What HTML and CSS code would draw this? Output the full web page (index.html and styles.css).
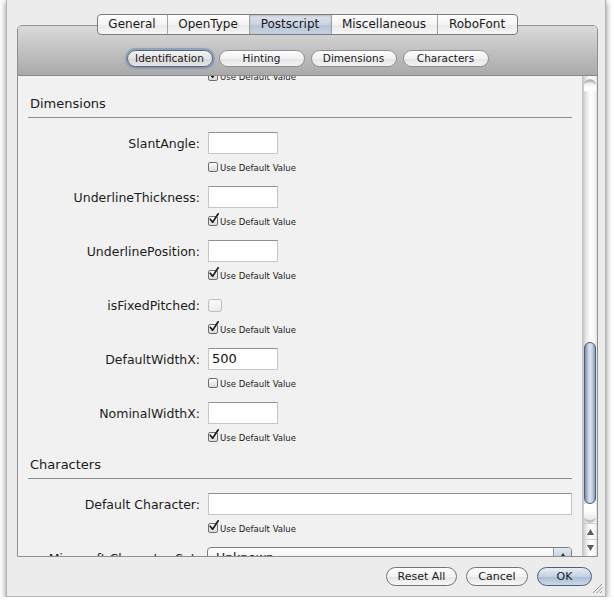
FILE: index.html
```html
<!DOCTYPE html>
<html>
<head>
<meta charset="utf-8">
<title>Font Info</title>
<link rel="stylesheet" href="styles.css">
</head>
<body>
<div class="window">
  <div class="tabs">
    <div class="seg w-general">General</div>
    <div class="seg w-opentype">OpenType</div>
    <div class="seg w-postscript selected">Postscript</div>
    <div class="seg w-misc">Miscellaneous</div>
    <div class="seg w-robofont">RoboFont</div>
  </div>
  <div class="panel">
    <div class="panel-header">
      <div class="pill focused">Identification</div>
      <div class="pill">Hinting</div>
      <div class="pill">Dimensions</div>
      <div class="pill">Characters</div>
    </div>
    <div class="panel-body">
      <div class="scroll">
        <div class="scroll-inner">
          <div class="check-row lead"><span class="cb checked"><svg viewBox="0 0 12 12" class="tick"><path d="M2.2 6.2 L4.6 9.2 L10.2 0.8"/></svg></span><span class="cb-label">Use Default Value</span></div>

          <div class="section">Dimensions</div>

          <div class="item">
            <div class="field-row"><span class="label">SlantAngle:</span><span class="field"></span></div>
            <div class="check-row"><span class="cb"></span><span class="cb-label">Use Default Value</span></div>
          </div>
          <div class="item">
            <div class="field-row"><span class="label">UnderlineThickness:</span><span class="field"></span></div>
            <div class="check-row"><span class="cb checked"><svg viewBox="0 0 12 12" class="tick"><path d="M2.2 6.2 L4.6 9.2 L10.2 0.8"/></svg></span><span class="cb-label">Use Default Value</span></div>
          </div>
          <div class="item">
            <div class="field-row"><span class="label">UnderlinePosition:</span><span class="field"></span></div>
            <div class="check-row"><span class="cb checked"><svg viewBox="0 0 12 12" class="tick"><path d="M2.2 6.2 L4.6 9.2 L10.2 0.8"/></svg></span><span class="cb-label">Use Default Value</span></div>
          </div>
          <div class="item">
            <div class="field-row"><span class="label">isFixedPitched:</span><span class="bigcb"></span></div>
            <div class="check-row"><span class="cb checked"><svg viewBox="0 0 12 12" class="tick"><path d="M2.2 6.2 L4.6 9.2 L10.2 0.8"/></svg></span><span class="cb-label">Use Default Value</span></div>
          </div>
          <div class="item">
            <div class="field-row"><span class="label">DefaultWidthX:</span><span class="field">500</span></div>
            <div class="check-row"><span class="cb"></span><span class="cb-label">Use Default Value</span></div>
          </div>
          <div class="item">
            <div class="field-row"><span class="label">NominalWidthX:</span><span class="field"></span></div>
            <div class="check-row"><span class="cb checked"><svg viewBox="0 0 12 12" class="tick"><path d="M2.2 6.2 L4.6 9.2 L10.2 0.8"/></svg></span><span class="cb-label">Use Default Value</span></div>
          </div>

          <div class="section">Characters</div>

          <div class="item">
            <div class="field-row"><span class="label">Default Character:</span><span class="field wide"></span></div>
            <div class="check-row"><span class="cb checked"><svg viewBox="0 0 12 12" class="tick"><path d="M2.2 6.2 L4.6 9.2 L10.2 0.8"/></svg></span><span class="cb-label">Use Default Value</span></div>
          </div>
          <div class="item">
            <div class="field-row"><span class="label">Microsoft Character Set:</span>
              <span class="popup"><span class="popup-text">Unknown</span><span class="popup-arrow"><svg viewBox="0 0 7 5" class="tri"><path d="M3.5 0 L7 5 L0 5 Z"/></svg></span></span>
            </div>
          </div>
        </div>
      </div>
      <div class="scrollbar">
        <div class="cap-top"></div>
        <div class="track-space"></div>
        <div class="thumb"></div>
        <div class="cap-bottom"></div>
        <div class="arrow up"><svg viewBox="0 0 7 6" class="tri"><path d="M3.5 0 L7 6 L0 6 Z"/></svg></div>
        <div class="arrow down"><svg viewBox="0 0 7 6" class="tri"><path d="M0 0 L7 0 L3.5 6 Z"/></svg></div>
      </div>
    </div>
  </div>
  <div class="buttons">
    <div class="btn w-reset">Reset All</div>
    <div class="btn w-cancel">Cancel</div>
    <div class="btn default w-ok">OK</div>
  </div>
  <svg class="grip" viewBox="0 0 12 12"><path d="M11 2 L2 11 M11 5.5 L5.5 11 M11 9 L9 11"/></svg>
</div>
</body>
</html>
```

FILE: styles.css
```css
* { box-sizing: border-box; }
html, body { margin: 0; padding: 0; background: #ffffff; }
body {
  font-family: "DejaVu Sans", "Liberation Sans", sans-serif;
  color: #1c1c1c;
}

.window {
  position: relative;
  margin-left: 6px;
  width: 600px;
  height: 597px;
  background: #ececec;
  border: 1px solid #b4b4b4;
  border-top: none;
  box-shadow: 0 2px 6px rgba(0, 0, 0, 0.5);
  padding: 14px 7px 0 10px;
  display: flex;
  flex-direction: column;
}

/* top segmented tabs */
.tabs {
  position: relative;
  z-index: 2;
  align-self: center;
  display: flex;
  height: 21px;
  border: 1px solid #7c7c7c;
  border-radius: 4px;
  background: linear-gradient(#ffffff, #f4f4f4 50%, #e9e9e9 51%, #f6f6f6);
  overflow: hidden;
  font-size: 12px;
  margin-left: -1px;
}
.seg {
  height: 19px;
  line-height: 19px;
  text-align: center;
  color: #1a1a1a;
  border-left: 1px solid #a3a3a3;
}
.seg:first-child { border-left: none; }
.w-general { width: 69px; }
.w-opentype { width: 82px; }
.w-postscript { width: 82px; }
.w-misc { width: 106px; }
.w-robofont { width: 80px; }
.seg.selected {
  background: linear-gradient(#dfe5ee, #c9d2df 50%, #b9c5d6 51%, #c6d1e0);
  box-shadow: inset 0 1px 2px rgba(0, 0, 0, 0.18);
}

/* tab panel */
.panel {
  margin-top: -10px;
  height: 532px;
  border: 1px solid #8f8f8f;
  border-radius: 5px 5px 0 0;
  display: flex;
  flex-direction: column;
  background: #f1f1f1;
}
.panel-header {
  height: 50px;
  flex: none;
  padding-top: 24px;
  border-radius: 4px 4px 0 0;
  background: linear-gradient(#dadada, #c4c4c4 45%, #a9a9a9);
  border-bottom: 1px solid #8a8a8a;
  display: flex;
  justify-content: center;
  gap: 6px;
}
.pill {
  width: 86px;
  height: 17px;
  line-height: 15px;
  border: 1px solid #8d8d8d;
  border-radius: 9px;
  background: linear-gradient(#ffffff, #f1f1f1 50%, #e4e4e4 51%, #f3f3f3);
  text-align: center;
  font-size: 10.5px;
  color: #1a1a1a;
}
.pill.focused {
  border-color: #55667c;
  background: linear-gradient(#f4f4f4, #e2e2e2 50%, #d5d5d5 51%, #e6e6e6);
  box-shadow: 0 0 1px 2px rgba(112, 140, 180, 0.65);
}

.panel-body {
  flex: 1;
  display: flex;
  min-height: 0;
}
.scroll {
  flex: 1;
  overflow: hidden;
  padding: 0 10px 0 10px;
}
.scroll-inner {
  margin-top: -7px;
}

.section {
  font-size: 13px;
  line-height: 17px;
  padding: 0 0 5px 2px;
  border-bottom: 1px solid #8c8c8c;
  margin-bottom: 14px;
  color: #1a1a1a;
}

.item { margin-bottom: 12px; }
.field-row {
  display: grid;
  grid-template-columns: 172px auto;
  column-gap: 8px;
  align-items: center;
  height: 22px;
}
.label {
  text-align: right;
  font-size: 12.5px;
  white-space: nowrap;
  color: #1c1c1c;
}
.field {
  display: block;
  width: 70px;
  height: 22px;
  background: #ffffff;
  border: 1px solid #c6c6c6;
  border-top-color: #8f8f8f;
  font-size: 13px;
  line-height: 20px;
  padding-left: 3px;
  color: #111;
}
.field.wide { width: 364px; }

.bigcb {
  display: block;
  width: 14px;
  height: 13px;
  border: 1px solid #bdbdbd;
  border-radius: 3px;
  background: linear-gradient(#fbfbfb, #ececec);
}

.check-row {
  height: 14px;
  margin-top: 6px;
  padding-left: 180px;
  display: flex;
  align-items: center;
  gap: 2px;
}
.check-row.lead { margin-top: 0; margin-bottom: 12px; }
.cb {
  display: block;
  width: 10px;
  height: 10px;
  border: 1px solid #6e6e6e;
  border-radius: 2px;
  background: linear-gradient(#ffffff, #e9e9e9 55%, #d8d8d8);
  overflow: visible;
}
.tick {
  display: block;
  width: 12px;
  height: 12px;
  margin: -4px 0 0 -1px;
  overflow: visible;
}
.tick path {
  fill: none;
  stroke: #1e1e1e;
  stroke-width: 1.7;
  stroke-linecap: round;
  stroke-linejoin: round;
}
.cb-label {
  font-family: "DejaVu Sans Condensed", "Liberation Sans", sans-serif;
  font-stretch: condensed;
  font-size: 9.5px;
  color: #1c1c1c;
  white-space: nowrap;
}

.popup {
  display: flex;
  width: 365px;
  height: 22px;
  margin-left: -1px;
  border: 1px solid #7d7d7d;
  border-radius: 4px;
  background: linear-gradient(#ffffff, #f2f2f2 50%, #e6e6e6 51%, #f5f5f5);
  overflow: hidden;
}
.popup-text {
  flex: 1;
  font-size: 12.5px;
  line-height: 20px;
  padding-left: 8px;
}
.popup-arrow {
  width: 18px;
  border-left: 1px solid #8a95a4;
  background: linear-gradient(#e3e9f1, #c4cfdd 50%, #b3c1d3 51%, #c7d3e2);
  display: flex;
  justify-content: center;
  padding-top: 5px;
}
.tri { display: block; width: 7px; height: 6px; }
.tri path { fill: #333; }
.popup-arrow .tri { width: 6px; height: 4px; }

/* scrollbar */
.scrollbar {
  width: 15px;
  flex: none;
  display: flex;
  flex-direction: column;
  border-left: 1px solid #c2c2c2;
  background: linear-gradient(to right, #c9c9c9, #e9e9e9 25%, #ffffff 55%, #f3f3f3 85%, #e2e2e2);
}
.cap-top {
  height: 12px;
  flex: none;
  border-top: 3px solid #b8b8b8;
  border-radius: 7px 7px 0 0;
  margin: 3px 1px 0 1px;
  background: linear-gradient(#e4e4e4, #ffffff 60%);
}
.track-space { height: 251px; flex: none; }
.thumb {
  height: 162px;
  flex: none;
  width: 12px;
  margin-left: 1px;
  border: 1px solid #4e5d72;
  border-radius: 6px;
  background: linear-gradient(to right, #7b8da5, #b2c2d6 25%, #dfe6ef 50%, #bccadb 75%, #8798af);
}
.cap-bottom {
  height: 19px;
  flex: none;
  margin: 0 1px;
  border-bottom: 3px solid #c2c2c2;
  border-radius: 0 0 7px 7px;
  background: linear-gradient(#ffffff 40%, #e6e6e6);
}
.arrow {
  flex: none;
  display: flex;
  justify-content: center;
  align-items: center;
  border-top: 1px solid #d0d0d0;
}
.arrow.up { height: 16px; }
.arrow.down { height: 17px; }
.arrow .tri path { fill: #5e5e5e; }

/* bottom buttons */
.buttons {
  margin-top: 10px;
  padding-right: 6px;
  display: flex;
  justify-content: flex-end;
  gap: 9px;
}
.btn {
  height: 19px;
  line-height: 17px;
  text-align: center;
  font-size: 11px;
  border: 1px solid #737373;
  border-radius: 10px;
  background: linear-gradient(#ffffff, #f3f3f3 50%, #e5e5e5 51%, #f7f7f7);
  color: #1a1a1a;
}
.w-reset { width: 71px; }
.w-cancel { width: 62px; }
.w-ok { width: 55px; }
.btn.default {
  border-color: #4f5f78;
  background: linear-gradient(#e6edf6, #c3d1e3 50%, #aabcd4 51%, #c9d7e9);
}

.grip {
  position: absolute;
  right: 2px;
  bottom: 2px;
  width: 12px;
  height: 12px;
}
.grip path { stroke: #9a9a9a; stroke-width: 1; fill: none; }
```
